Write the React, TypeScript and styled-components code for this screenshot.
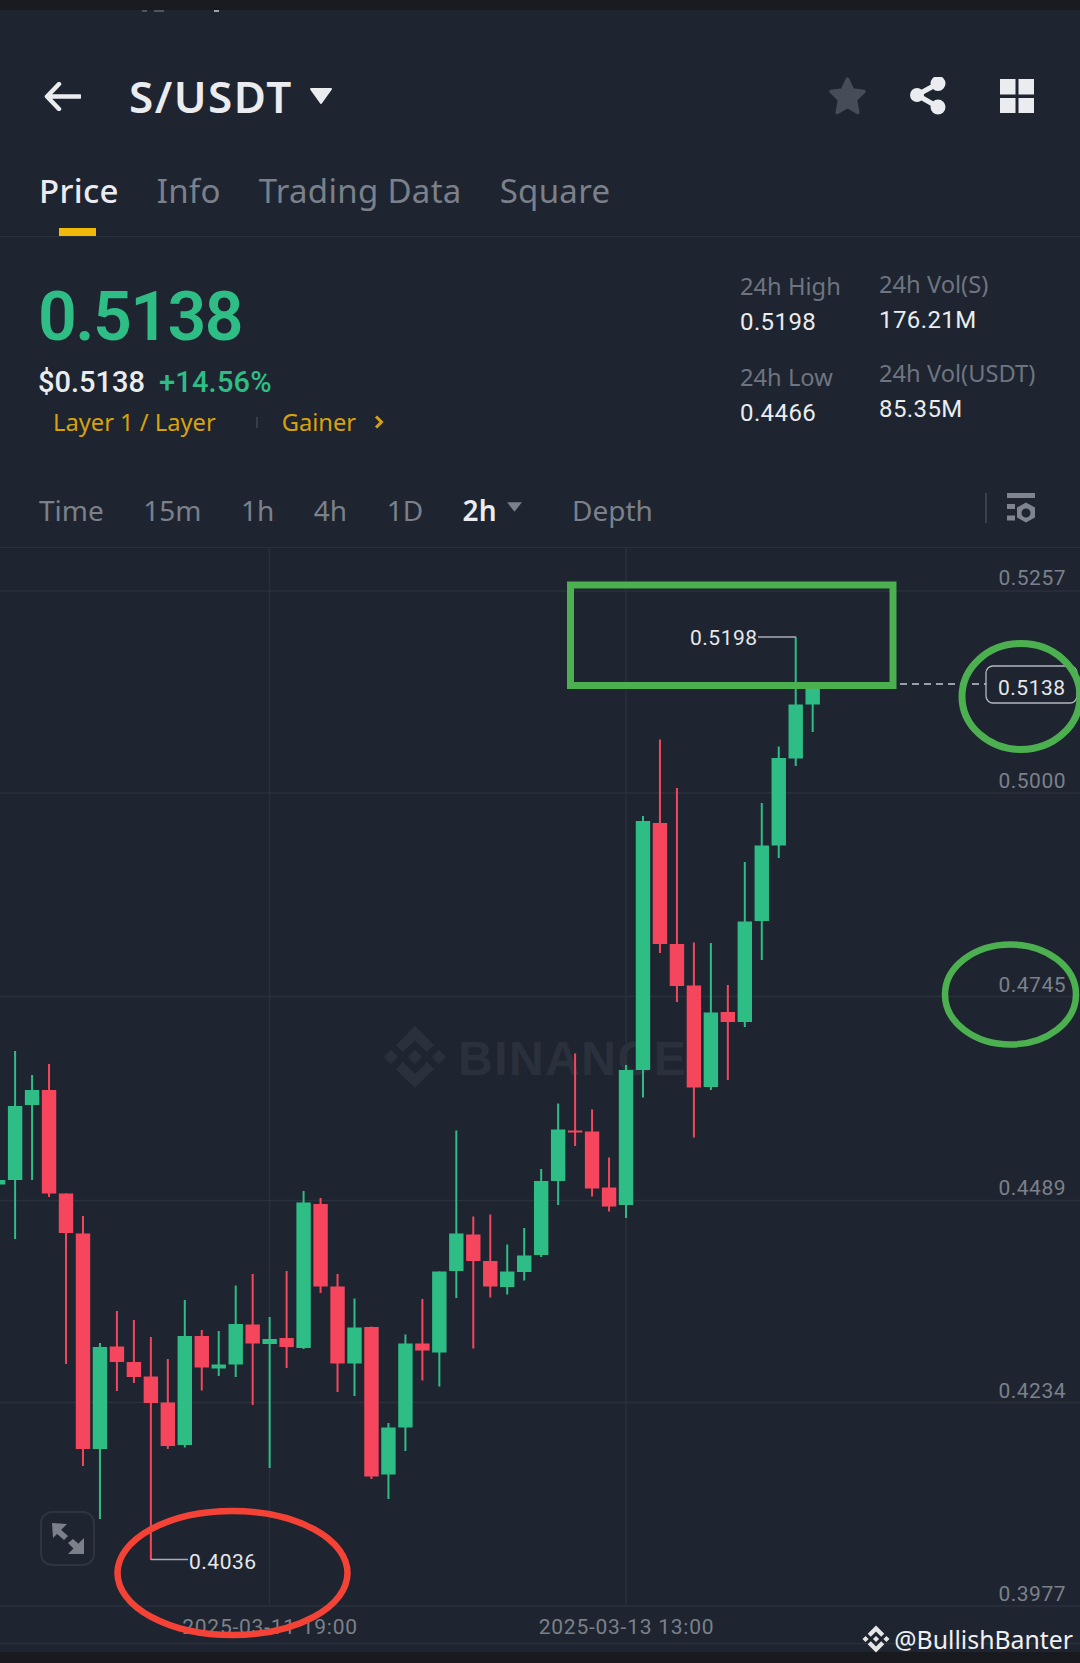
import React from "react";
import styled, { createGlobalStyle } from "styled-components";

const BG = "#1e2530";
const UP = "#2ebd85";
const DOWN = "#f6465d";
const GRID = "#2b313b";
const MUTED = "#7b808a";
const TEXT = "#eaecef";

const GlobalStyle = createGlobalStyle`
  html, body {
    margin: 0;
    padding: 0;
    background: ${BG};
  }
  * {
    box-sizing: border-box;
  }
`;

// [high, top of body, bottom of body, low, direction], in page pixels
type Candle = [number, number, number, number, "u" | "d"];

const candles: Candle[] = [
  [1180, 1180, 1184.5, 1185, "u"],
  [1051, 1106, 1180, 1239, "u"],
  [1075, 1090, 1105, 1180, "u"],
  [1064, 1090, 1193.5, 1197, "d"],
  [1193.5, 1193.5, 1233, 1364, "d"],
  [1216, 1233.5, 1449, 1466, "d"],
  [1343, 1347, 1449, 1519, "u"],
  [1311, 1346.5, 1362, 1391, "d"],
  [1320, 1362, 1377, 1383, "d"],
  [1337, 1376.5, 1403, 1560, "d"],
  [1359, 1402.5, 1446, 1449, "d"],
  [1300, 1336, 1445, 1447.5, "u"],
  [1330, 1336, 1367.5, 1390.5, "d"],
  [1331, 1364.5, 1368.5, 1376, "u"],
  [1285.5, 1324, 1364.5, 1377, "u"],
  [1274, 1324.5, 1343.5, 1405, "d"],
  [1317, 1339, 1344, 1468, "u"],
  [1271, 1338, 1347, 1368, "d"],
  [1191, 1202.5, 1348, 1349, "u"],
  [1198, 1204, 1286.5, 1293, "d"],
  [1274, 1286.5, 1363.5, 1392, "d"],
  [1298.5, 1327.5, 1363.5, 1396, "u"],
  [1326.5, 1327, 1476.5, 1479, "d"],
  [1423, 1427.5, 1474.5, 1499, "u"],
  [1334.5, 1343.5, 1427.5, 1451, "u"],
  [1299, 1343.5, 1350.5, 1380.5, "d"],
  [1271.5, 1271.5, 1352.5, 1386.5, "u"],
  [1130.5, 1233.5, 1271, 1298, "u"],
  [1216.5, 1234.5, 1261, 1348.5, "d"],
  [1214.5, 1261, 1286.5, 1297.5, "d"],
  [1244.5, 1271.5, 1287, 1294.5, "u"],
  [1228, 1255.5, 1272, 1280.5, "u"],
  [1169, 1181, 1255, 1257, "u"],
  [1103.5, 1129.5, 1181, 1205, "u"],
  [1053.5, 1130.5, 1132.5, 1146, "d"],
  [1109.5, 1131.5, 1188.5, 1196.5, "d"],
  [1157.5, 1187.5, 1206.5, 1211.5, "d"],
  [1065, 1070, 1205, 1218, "u"],
  [816, 821, 1070, 1097.5, "u"],
  [739.5, 823, 944, 953, "d"],
  [788, 944, 986, 1002, "d"],
  [942.5, 985.5, 1087.5, 1137.5, "d"],
  [943, 1012.5, 1087, 1090, "u"],
  [985, 1012, 1022, 1080, "d"],
  [862, 921.5, 1022, 1027, "u"],
  [803, 845.5, 921, 960, "u"],
  [746.5, 758, 845.5, 858, "u"],
  [637, 704.5, 758.5, 766, "u"],
  [684, 684, 704.5, 732, "u"],
];

const gridRows = [591, 793, 996.5, 1200.5, 1402.5, 1606, 1643.5];
const axisLabels = [
  ["0.5257", 577],
  ["0.5000", 780],
  ["0.4745", 984],
  ["0.4489", 1187],
  ["0.4234", 1390],
  ["0.3977", 1593],
] as const;

const BinanceMark: React.FC<{ cx: number; cy: number; r: number; fill: string }> = ({ cx, cy, r, fill }) => {
  const s = r / 31;
  return (
    <g transform={`translate(${cx} ${cy}) scale(${s})`} fill={fill}>
      <polygon points="0,-7 7,0 0,7 -7,0" />
      <polygon points="-24,-7 -17,0 -24,7 -31,0" />
      <polygon points="24,-7 31,0 24,7 17,0" />
      <polygon points="0,-31 19,-12 12,-5 0,-17 -12,-5 -19,-12" />
      <polygon points="0,31 19,12 12,5 0,17 -12,5 -19,12" />
    </g>
  );
};

const App: React.FC = () => {
  return (
    <Page>
      <GlobalStyle />
      <StatusCrop>
        <CropBit $left={142} $width={5} />
        <CropBit $left={154} $width={10} />
        <CropBit $left={214} $width={5} $bright />
      </StatusCrop>

      <Header>
        <BackIcon viewBox="0 0 37 29">
          <path d="M36 14.5H4M15 2 3 14.5 15 27" />
        </BackIcon>
        <Title>S/USDT</Title>
        <TitleCaret viewBox="0 0 24 18">
          <path d="M2 2h20L12 16z" />
        </TitleCaret>
        <HeaderIcons>
          <StarIcon viewBox="0 0 37 38">
            <polygon points="18.5,2 23.6,13 35,14.5 26.5,22.8 28.8,35.5 18.5,29.5 8.2,35.5 10.5,22.8 2,14.5 13.4,13" />
          </StarIcon>
          <ShareIcon viewBox="0 0 36 38">
            <path d="M28 6.5 7 18l21 12" />
            <circle cx="28" cy="6.5" r="7.5" />
            <circle cx="7" cy="18" r="7" />
            <circle cx="28" cy="30" r="7.5" />
          </ShareIcon>
          <GridIcon viewBox="0 0 34 34">
            <rect x="0" y="0" width="15.5" height="15.5" />
            <rect x="18.5" y="0" width="15.5" height="15.5" />
            <rect x="0" y="19" width="15.5" height="15" />
            <rect x="18.5" y="19" width="15.5" height="15" />
          </GridIcon>
        </HeaderIcons>
      </Header>

      <Tabs>
        <Tab $active>Price</Tab>
        <Tab>Info</Tab>
        <Tab>Trading Data</Tab>
        <Tab>Square</Tab>
      </Tabs>

      <Stats>
        <Summary>
          <BigPrice>0.5138</BigPrice>
          <FiatRow>
            <Fiat>$0.5138</Fiat>
            <Change>+14.56%</Change>
          </FiatRow>
          <TagRow>
            <span>Layer 1 / Layer</span>
            <TagDivider />
            <span>Gainer</span>
            <TagChevron viewBox="0 0 10 14">
              <path d="M2 1.5l5.5 5.5-5.5 5.5" />
            </TagChevron>
          </TagRow>
        </Summary>
        <StatColumn $width={139} $top={32} $gap={21}>
          <StatBlock>
            <StatLabel>24h High</StatLabel>
            <StatValue>0.5198</StatValue>
          </StatBlock>
          <StatBlock>
            <StatLabel>24h Low</StatLabel>
            <StatValue>0.4466</StatValue>
          </StatBlock>
        </StatColumn>
        <StatColumn $width={201} $top={30} $gap={19}>
          <StatBlock>
            <StatLabel>24h Vol(S)</StatLabel>
            <StatValue>176.21M</StatValue>
          </StatBlock>
          <StatBlock>
            <StatLabel>24h Vol(USDT)</StatLabel>
            <StatValue>85.35M</StatValue>
          </StatBlock>
        </StatColumn>
      </Stats>

      <TimeRow>
        <TimeItem>Time</TimeItem>
        <TimeItem>15m</TimeItem>
        <TimeItem>1h</TimeItem>
        <TimeItem>4h</TimeItem>
        <TimeItem>1D</TimeItem>
        <TimeItem $active>
          2h
          <SmallCaret viewBox="0 0 16 11">
            <path d="M1 1h14L8 10z" />
          </SmallCaret>
        </TimeItem>
        <DepthItem>Depth</DepthItem>
        <ToolDivider />
        <SettingsIcon viewBox="0 0 30 30">
          <rect x="1" y="0" width="28" height="5" />
          <rect x="1" y="11" width="8" height="5" />
          <rect x="1" y="22.5" width="8" height="5" />
          <path
            fillRule="evenodd"
            d="M20 9.5l9 5v10l-9 5-9-5v-10zM20 15.5a4.5 4.5 0 1 0 0 9 4.5 4.5 0 0 0 0-9z"
          />
        </SettingsIcon>
      </TimeRow>

      <ChartArea>
        <ChartSvg viewBox="0 548 1080 1104">
          {gridRows.map((y) => (
            <line key={y} x1={0} x2={1080} y1={y} y2={y} stroke={GRID} strokeWidth={1.5} />
          ))}
          <line x1={269.5} x2={269.5} y1={548} y2={1606} stroke={GRID} strokeWidth={1.5} />
          <line x1={626} x2={626} y1={548} y2={1606} stroke={GRID} strokeWidth={1.5} />

          <BinanceMark cx={415} cy={1057} r={31} fill="#2b313c" />
          <Watermark x={458} y={1075}>BINANCE</Watermark>

          {candles.map(([high, top, bottom, low, dir], i) => {
            const cx = -1.87 + 16.97 * i;
            const color = dir === "u" ? UP : DOWN;
            return (
              <g key={i} fill={color}>
                <rect x={cx - 1} y={high} width={2} height={low - high} />
                <rect x={cx - 7.2} y={top} width={14.4} height={Math.max(bottom - top, 2)} />
              </g>
            );
          })}

          <line x1={758} x2={796} y1={637} y2={637} stroke="#a8adb5" strokeWidth={1.5} />
          <line x1={151} x2={188} y1={1559.5} y2={1559.5} stroke="#a8adb5" strokeWidth={1.5} />
          <PointLabel x={690} y={644.5}>0.5198</PointLabel>
          <PointLabel x={189} y={1568.5}>0.4036</PointLabel>

          {axisLabels.map(([label, y]) => (
            <AxisLabel key={label} x={1066} y={y + 7.5}>{label}</AxisLabel>
          ))}
          <TimeLabel x={270} y={1634}>2025-03-11 19:00</TimeLabel>
          <TimeLabel x={626.5} y={1634}>2025-03-13 13:00</TimeLabel>

          <line x1={900} x2={986} y1={684} y2={684} stroke="#9aa0a8" strokeWidth={2} strokeDasharray="7 5" />
          <rect x={986} y={666} width={91} height={37} rx={7} fill={BG} stroke="#b4b8bf" strokeWidth={1.3} />
          <PointLabel x={998} y={694.5}>0.5138</PointLabel>

          <rect x={570.5} y={585} width={322.5} height={100.5} fill="none" stroke="#4caf50" strokeWidth={7} />
          <ellipse cx={1021} cy={696.5} rx={59} ry={53} fill="none" stroke="#4caf50" strokeWidth={7} />
          <ellipse cx={1010.5} cy={994.5} rx={65.5} ry={50} fill="none" stroke="#4caf50" strokeWidth={6.5} />
          <ellipse cx={232.5} cy={1573} rx={115} ry={62} fill="none" stroke="#f44336" strokeWidth={6.5} />
        </ChartSvg>
        <ExpandButton>
          <svg width="32" height="31" viewBox="0 0 32 31" fill={MUTED}>
            <polygon points="0,0 15,1 1,15" />
            <polygon points="7,5 16,13 12,17 4,10" />
            <polygon points="32,31 32,15 16,31" />
            <polygon points="21,16 29,23 24,28 16,20" />
          </svg>
        </ExpandButton>
      </ChartArea>

      <FooterBand />

      <Credit>
        <CreditMark viewBox="0 0 28 28">
          <BinanceMark cx={14} cy={14} r={13.5} fill="#e6e6e6" />
        </CreditMark>
        @BullishBanter
      </Credit>
    </Page>
  );
};

export default App;

const Page = styled.div`
  position: relative;
  width: 1080px;
  height: 1663px;
  overflow: hidden;
  display: flex;
  flex-direction: column;
  background: ${BG};
  font-family: "Noto Sans", "Liberation Sans", sans-serif;
`;

const StatusCrop = styled.div`
  position: relative;
  height: 10px;
  flex: none;
  background: #1a1b20;
`;

const CropBit = styled.i<{ $left: number; $width: number; $bright?: boolean }>`
  position: absolute;
  top: 10px;
  left: ${(p) => p.$left}px;
  width: ${(p) => p.$width}px;
  height: 2px;
  background: ${(p) => (p.$bright ? "#9da1a8" : "#4f545d")};
`;

const Header = styled.header`
  flex: none;
  height: 140px;
  padding: 60px 46px 28px 44px;
  display: flex;
  align-items: center;
`;

const BackIcon = styled.svg`
  width: 37px;
  height: 29px;
  margin-right: 48px;
  fill: none;
  stroke: ${TEXT};
  stroke-width: 4.5;
  stroke-linecap: round;
  stroke-linejoin: round;
`;

const Title = styled.h1`
  margin: 0;
  font-size: 44px;
  line-height: 52px;
  font-weight: 600;
  letter-spacing: 1.5px;
  color: ${TEXT};
`;

const TitleCaret = styled.svg`
  width: 24px;
  height: 18px;
  margin-left: 16px;
  fill: ${TEXT};
  stroke: ${TEXT};
  stroke-width: 2;
  stroke-linejoin: round;
`;

const HeaderIcons = styled.div`
  margin-left: auto;
  display: flex;
  align-items: center;
  gap: 44px;
`;

const StarIcon = styled.svg`
  width: 37px;
  height: 38px;
  overflow: visible;
  fill: #474d57;
  stroke: #474d57;
  stroke-width: 3.5;
  stroke-linejoin: round;
`;

const ShareIcon = styled.svg`
  width: 36px;
  height: 38px;
  fill: ${TEXT};
  stroke: none;
  path {
    fill: none;
    stroke: ${TEXT};
    stroke-width: 5;
  }
`;

const GridIcon = styled.svg`
  width: 34px;
  height: 34px;
  margin-left: 10px;
  fill: ${TEXT};
`;

const Tabs = styled.nav`
  flex: none;
  height: 87px;
  padding: 19px 0 0 39px;
  display: flex;
  gap: 38px;
  border-bottom: 1px solid ${GRID};
`;

const Tab = styled.div<{ $active?: boolean }>`
  position: relative;
  font-size: 33px;
  line-height: 44px;
  letter-spacing: 0.3px;
  font-weight: ${(p) => (p.$active ? 500 : 400)};
  color: ${(p) => (p.$active ? TEXT : MUTED)};
  &::after {
    content: "";
    display: ${(p) => (p.$active ? "block" : "none")};
    position: absolute;
    top: 59px;
    left: 20px;
    width: 37px;
    height: 8px;
    background: #f0b90b;
  }
`;

const Stats = styled.section`
  flex: none;
  height: 235px;
  display: flex;
`;

const Summary = styled.div`
  width: 740px;
  padding: 40px 0 0 38px;
`;

const BigPrice = styled.div`
  font-family: Roboto, "Liberation Sans", sans-serif;
  font-size: 68px;
  line-height: 80px;
  font-weight: 600;
  letter-spacing: -1.6px;
  color: ${UP};
`;

const FiatRow = styled.div`
  margin-top: 8px;
  display: flex;
  gap: 14px;
  font-family: Roboto, "Liberation Sans", sans-serif;
  font-size: 29px;
  line-height: 34px;
  font-weight: 500;
`;

const Fiat = styled.span`
  color: ${TEXT};
`;

const Change = styled.span`
  letter-spacing: 0.2px;
  color: ${UP};
`;

const TagRow = styled.div`
  margin-top: 7px;
  padding-left: 15px;
  display: flex;
  align-items: center;
  font-size: 23.7px;
  line-height: 32px;
  color: #d8a20d;
`;

const TagDivider = styled.i`
  width: 2px;
  height: 11px;
  margin: 0 24px 0 40px;
  background: #383e49;
`;

const TagChevron = styled.svg`
  width: 10px;
  height: 14px;
  margin-left: 18px;
  fill: none;
  stroke: #d8a20d;
  stroke-width: 3;
`;

const StatColumn = styled.div<{ $width: number; $top: number; $gap: number }>`
  width: ${(p) => p.$width}px;
  padding-top: ${(p) => p.$top}px;
  display: flex;
  flex-direction: column;
  gap: ${(p) => p.$gap}px;
`;

const StatBlock = styled.div`
  display: flex;
  flex-direction: column;
`;

const StatLabel = styled.div`
  margin-bottom: 2px;
  font-size: 23.7px;
  line-height: 34px;
  color: #6e7480;
`;

const StatValue = styled.div`
  font-family: Roboto, "Liberation Sans", sans-serif;
  font-size: 24px;
  line-height: 34px;
  letter-spacing: 0.4px;
  color: ${TEXT};
`;

const TimeRow = styled.div`
  flex: none;
  height: 76px;
  padding: 0 44px 0 39px;
  display: flex;
  align-items: center;
  gap: 39.5px;
  border-bottom: 1px solid ${GRID};
`;

const TimeItem = styled.div<{ $active?: boolean }>`
  display: flex;
  align-items: center;
  font-size: 28px;
  line-height: 40px;
  font-weight: ${(p) => (p.$active ? 600 : 400)};
  color: ${(p) => (p.$active ? TEXT : MUTED)};
`;

const DepthItem = styled(TimeItem)`
  margin-left: 10px;
`;

const SmallCaret = styled.svg`
  width: 17px;
  height: 12px;
  margin: -6px 0 0 9px;
  fill: ${MUTED};
`;

const ToolDivider = styled.i`
  width: 2px;
  height: 30px;
  margin: -4px -20px 0 auto;
  background: #3a404b;
`;

const SettingsIcon = styled.svg`
  width: 30px;
  height: 30px;
  margin-top: -4px;
  fill: #7f848e;
`;

const ChartArea = styled.main`
  position: relative;
  flex: none;
  height: 1104px;
`;

const ChartSvg = styled.svg`
  display: block;
  width: 1080px;
  height: 1104px;
`;

const Watermark = styled.text`
  font-family: "Liberation Sans", sans-serif;
  font-size: 48px;
  font-weight: 700;
  letter-spacing: 1.5px;
  fill: #2b313c;
`;

const PointLabel = styled.text`
  font-family: Roboto, "Liberation Sans", sans-serif;
  font-size: 21px;
  letter-spacing: 0.5px;
  fill: #e6e8ea;
`;

const AxisLabel = styled.text`
  font-family: Roboto, "Liberation Sans", sans-serif;
  font-size: 21px;
  letter-spacing: 0.5px;
  text-anchor: end;
  fill: ${MUTED};
`;

const TimeLabel = styled.text`
  font-family: Roboto, "Liberation Sans", sans-serif;
  font-size: 21px;
  letter-spacing: 0.75px;
  text-anchor: middle;
  fill: ${MUTED};
`;

const ExpandButton = styled.div`
  position: absolute;
  left: 40px;
  top: 963px;
  width: 55px;
  height: 55px;
  display: flex;
  align-items: center;
  justify-content: center;
  border: 2px solid #2f3540;
  border-radius: 12px;
`;

const FooterBand = styled.div`
  flex: 1;
  background: #191a20;
`;

const Credit = styled.div`
  position: absolute;
  right: 7px;
  bottom: 9px;
  display: flex;
  align-items: center;
  gap: 4px;
  font-size: 24.8px;
  line-height: 30px;
  color: #f0f0f0;
`;

const CreditMark = styled.svg`
  width: 28px;
  height: 28px;
`;
